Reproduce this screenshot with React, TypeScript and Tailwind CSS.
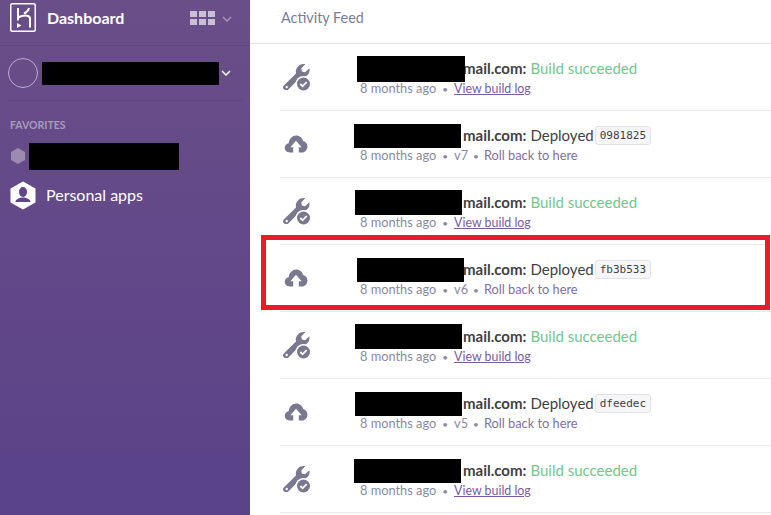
import React from 'react';

type Activity = {
    kind: 'build' | 'deploy';
    boxLeft: number;
    boxWidth: number;
    boxHeight: number;
    commit?: string;
    version?: string;
};

const activities: Activity[] = [
    { kind: 'build', boxLeft: -3, boxWidth: 108, boxHeight: 26 },
    { kind: 'deploy', boxLeft: -6, boxWidth: 107, boxHeight: 24, commit: '0981825', version: 'v7' },
    { kind: 'build', boxLeft: -5, boxWidth: 107, boxHeight: 25 },
    { kind: 'deploy', boxLeft: -3, boxWidth: 107, boxHeight: 24, commit: 'fb3b533', version: 'v6' },
    { kind: 'build', boxLeft: -5, boxWidth: 107, boxHeight: 25 },
    { kind: 'deploy', boxLeft: -5, boxWidth: 107, boxHeight: 24, commit: 'dfeedec', version: 'v5' },
    { kind: 'build', boxLeft: -6, boxWidth: 107, boxHeight: 24 },
];

const WrenchIcon = () => (
    <svg className="ml-[2px]" width="28" height="28" viewBox="0 0 28 28" fill="#79788f">
        <path d="M3 27c-1 0-2-.4-2.600-1.200C-.3 24.800-.1 23.300.8 22.400L13 10.500C12.500 8 13 5.500 15 3.500 17 1.500 19.700.7 22.300 1.300L18.300 5.200l.5 3.400 3.400.6 4.100-4c.6 2.500 0 5-1.800 6.900-2 2-4.600 2.700-7.200 2.100L5.400 26.400c-.6.500-1.500.7-2.400.6z" />
        <circle cx="3.700" cy="24" r="1.200" fill="#fff" />
        <circle cx="20.500" cy="21" r="8" fill="#fff" />
        <circle cx="20.500" cy="21" r="6.500" />
        <path d="M17.300 21l2.300 2.300 4.100-4.300" fill="none" stroke="#fff" strokeWidth="1.800" />
    </svg>
);

const CloudIcon = () => (
    <svg width="24" height="18" viewBox="0 0 26 20" fill="#79788f">
        <path d="M6 19.500C2.800 19.500.5 17.300.5 14.300c0-2.700 1.800-4.700 4.400-5.200C5.500 4 9 .5 13.200.5c3.700 0 6.800 2.500 7.700 6.100 2.900.6 4.800 3.100 4.800 6.100 0 3.800-2.700 6.800-6.300 6.800h-3.300v-6h3.200L13 6.500l-6.300 7h3.200v6z" />
    </svg>
);

const FeedRow = ({ item }: { item: Activity }) => (
    <div className="flex h-[67px] items-center border-b border-[#e8e8ee]">
        <div className="flex w-[32px] justify-center">
            {item.kind === 'build' ? <WrenchIcon /> : <CloudIcon />}
        </div>
        <div className="flex flex-col pl-[48px]">
            <div className="flex h-[24px] items-center text-[15px] text-[#3f3f44]">
                <span
                    className="relative z-10 shrink-0 bg-black"
                    style={{ marginLeft: item.boxLeft, width: item.boxWidth, height: item.boxHeight }}
                />
                <span className="font-bold" style={{ marginLeft: 103 - (item.boxLeft + item.boxWidth) }}>
                    mail.com:
                </span>
                {item.kind === 'build' ? (
                    <span className="ml-[4px] text-[#74c68f]">Build succeeded</span>
                ) : (
                    <>
                        <span className="ml-[4px]">Deployed</span>
                        <code className="ml-[1px] rounded-[3px] border border-[#e2e2e6] bg-[#f6f6f8] px-[4px] text-[11px] leading-[17px] text-[#3f3f44] [font-family:'DejaVu_Sans_Mono',monospace]">
                            {item.commit}
                        </code>
                    </>
                )}
            </div>
            <div className="flex h-[17px] items-center text-[12.8px] text-[#8a8a9e]">
                <span>8 months ago</span>
                <span className="mx-[6px] text-[10px]">•</span>
                {item.kind === 'build' ? (
                    <span className="text-[12.400px] text-[#7b5a9e] underline">View build log</span>
                ) : (
                    <>
                        <span>{item.version}</span>
                        <span className="mx-[5px] text-[10px]">•</span>
                        <span className="text-[#80709f]">Roll back to here</span>
                    </>
                )}
            </div>
        </div>
    </div>
);

export default function App() {
    return (
        <div className="relative flex h-[515px] w-[771px] overflow-hidden bg-white [font-family:Lato,sans-serif]">
            <aside className="flex h-full w-[250px] shrink-0 flex-col bg-gradient-to-b from-[#6a4e88] to-[#5a4289] text-white">
                <div className="flex h-[46px] items-start border-b border-[#5f4580] pl-[10px] pt-[3px]">
                    <svg width="26" height="29" viewBox="0 0 26 29" fill="none">
                        <rect x="0.750" y="0.750" width="24.500" height="27.500" rx="1.500" stroke="#fff" strokeWidth="1.500" />
                        <path d="M8 5v12.500M8 14.500c3-1.500 7-2.500 10-1.500 1.500.5 2 1.500 2 3v8.500M19 5c-.5 2.500-2 4-5 5.500" stroke="#fff" strokeWidth="2" fill="none" />
                        <path d="M7 20l4.500 2.500L7 25z" fill="#fff" />
                    </svg>
                    <span className="ml-[11px] mt-[3px] text-[16px] font-bold">Dashboard</span>
                    <div className="ml-[66px] mt-[8px] grid grid-cols-3 gap-[2px]">
                        {[0, 1, 2, 3, 4, 5].map((n) => (
                            <span key={n} className="h-[6px] w-[7px] bg-[#c9bfd6]" />
                        ))}
                    </div>
                    <svg className="ml-[7px] mt-[13px]" width="10" height="7" viewBox="0 0 10 7" fill="none">
                        <path d="M1 1l4 4 4-4" stroke="#a99bbd" strokeWidth="1.300" />
                    </svg>
                </div>
                <div className="mx-[8px] flex h-[55px] items-center border-b border-[#5f4580]">
                    <span className="h-[30px] w-[30px] rounded-full border border-[#b9add0]" />
                    <span className="ml-[4px] h-[23px] w-[177px] bg-black" />
                    <svg className="ml-[2px]" width="10" height="7" viewBox="0 0 10 7" fill="none">
                        <path d="M1 1l4 4 4-4" stroke="#fff" strokeWidth="1.500" />
                    </svg>
                </div>
                <div className="mt-[17px] pl-[10px] text-[10.500px] font-bold text-[#a99bbd]">FAVORITES</div>
                <div className="mt-[9px] flex items-center pl-[10px]">
                    <svg width="16" height="18" viewBox="0 0 16 18">
                        <path d="M8 1l7 4v8l-7 4-7-4V5z" fill="#9b8bb0" />
                    </svg>
                    <span className="ml-[3px] h-[27px] w-[150px] bg-black" />
                </div>
                <div className="mt-[11px] flex items-center pl-[10px]">
                    <svg width="26" height="29" viewBox="0 0 26 29">
                        <path d="M13 1.500l11.500 6.500v13l-11.500 6.500-11.500-6.500V8z" fill="#fff" stroke="#fff" strokeWidth="2" strokeLinejoin="round" />
                        <ellipse cx="13" cy="11" rx="4" ry="5" fill="#5f4589" />
                        <path d="M5.500 21c0-2.500 3-3.500 5.500-4.500h4c2.500 1 5.500 2 5.500 4.500z" fill="#5f4589" />
                    </svg>
                    <span className="ml-[10px] text-[16px]">Personal apps</span>
                </div>
            </aside>
            <main className="flex-1">
                <div className="flex h-[44px] items-start border-b border-[#e0e0e6] pl-[31px] pt-[7px] text-[14.400px] text-[#7d7d92]">
                    Activity Feed
                </div>
                <div className="pl-[30px]">
                    {activities.map((item, i) => (
                        <FeedRow key={i} item={item} />
                    ))}
                </div>
            </main>
            <div className="pointer-events-none absolute left-[261px] top-[235px] h-[75px] w-[509px] border-[5px] border-[#ed1c24]" />
        </div>
    );
}
